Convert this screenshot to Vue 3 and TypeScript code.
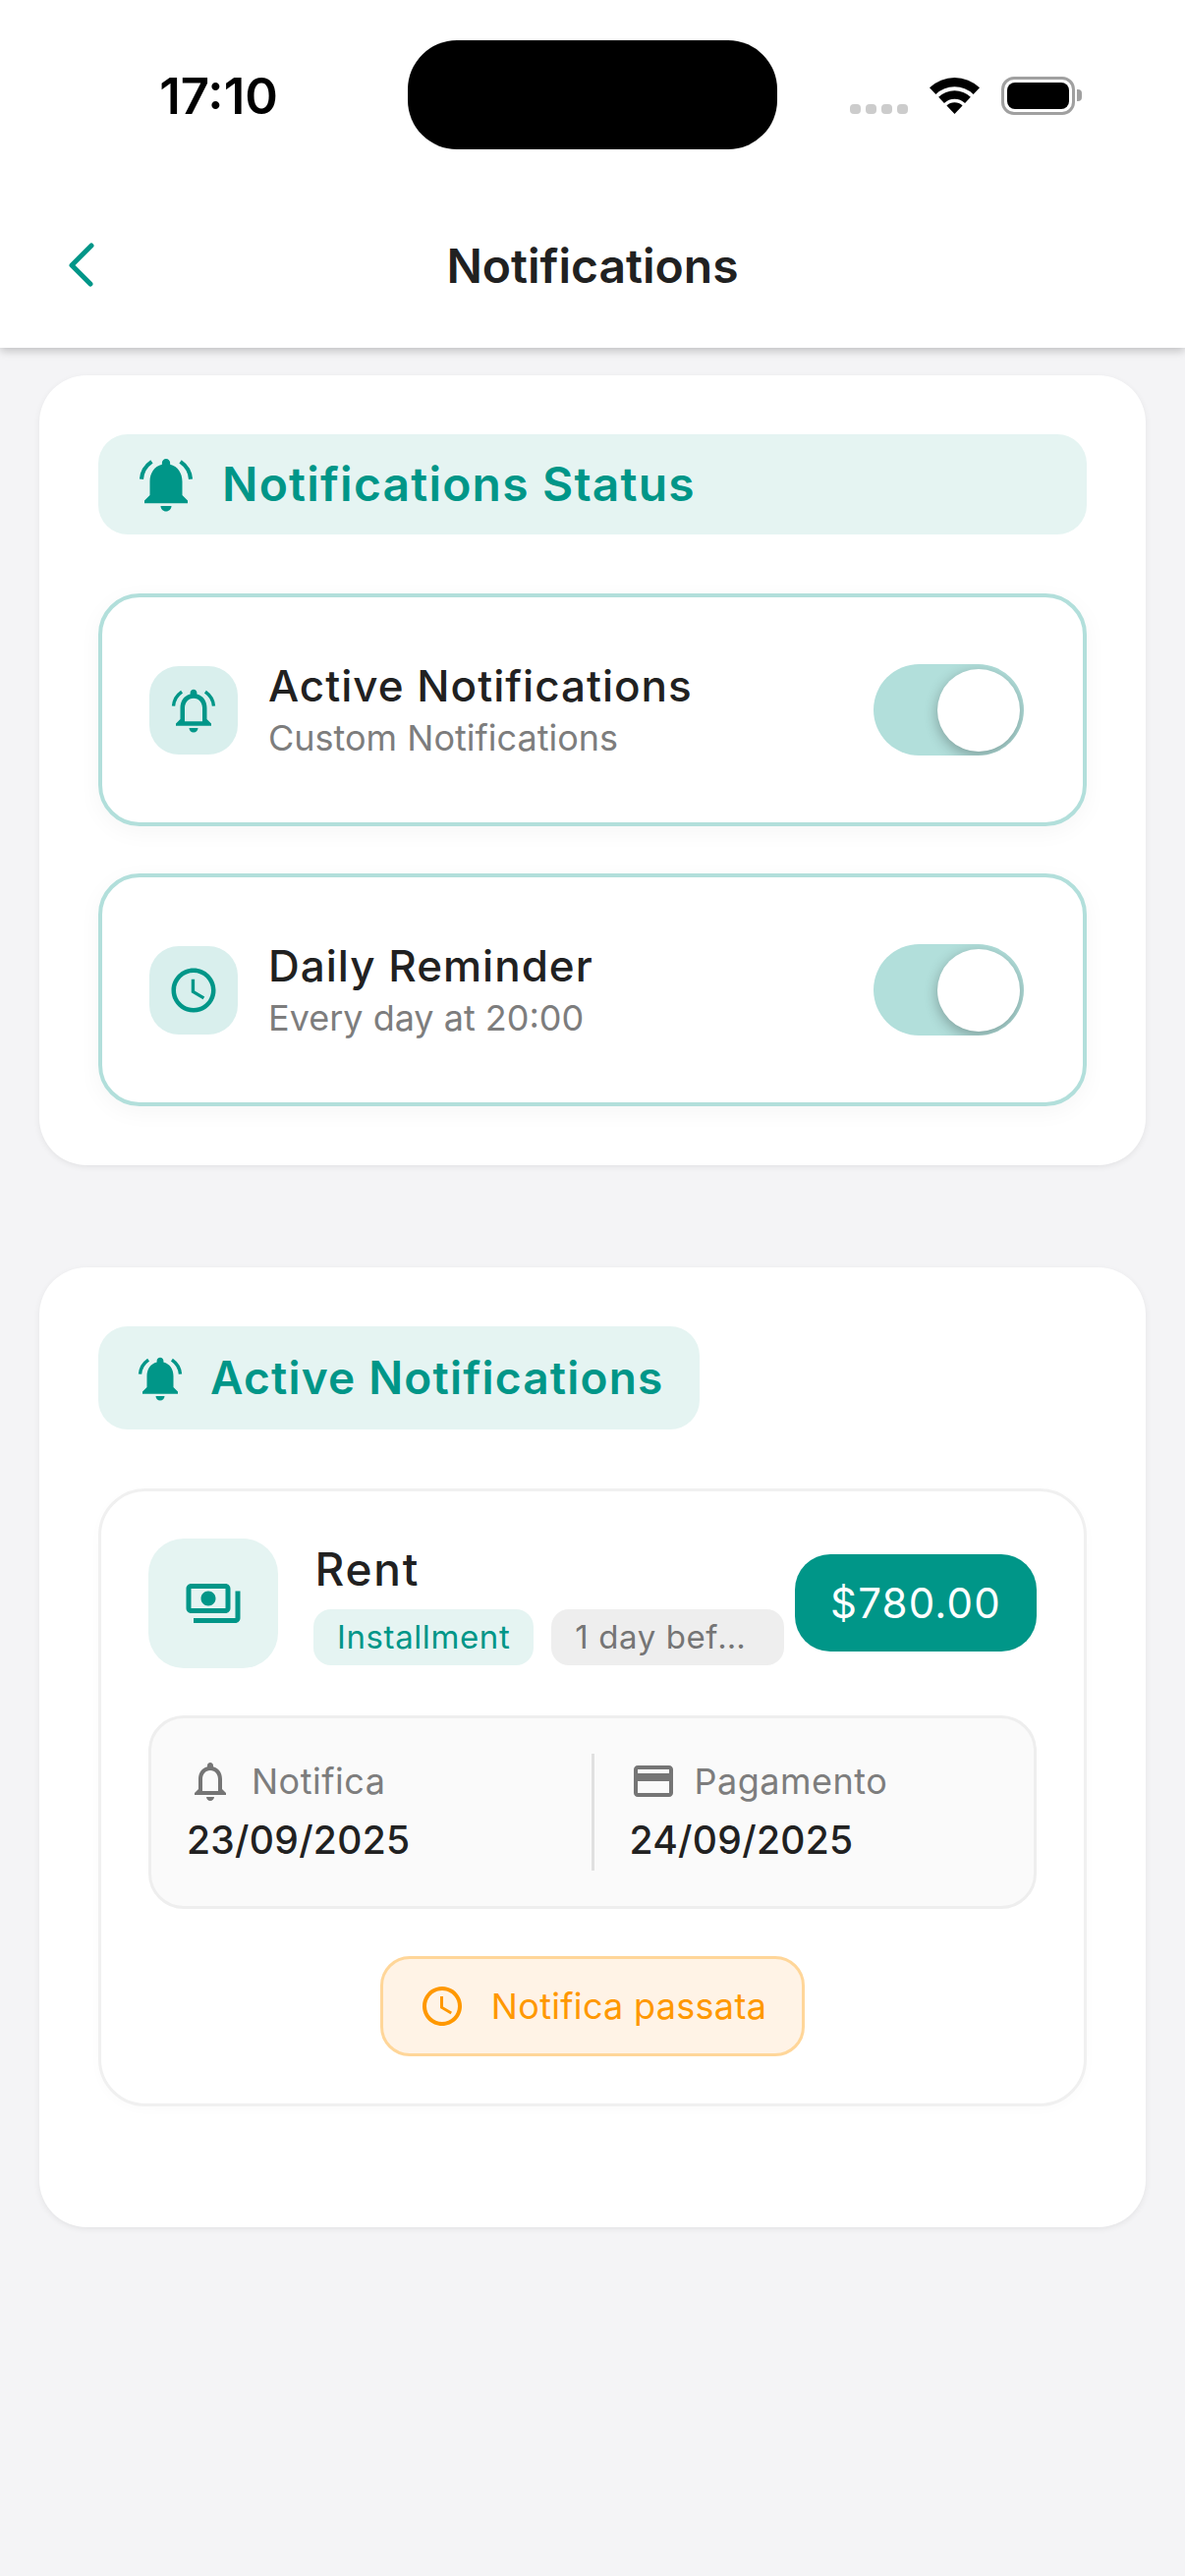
<script setup lang="ts">
const bell = 'M18 16v-5c0-3.07-1.64-5.64-4.5-6.32V4c0-.83-.67-1.5-1.5-1.5s-1.5.67-1.5 1.5v.68C7.63 5.36 6 7.92 6 11v5l-2 2v1h16v-1l-2-2zm-2 1H8v-6c0-2.48 1.51-4.5 4-4.5s4 2.02 4 4.5v6zM12 22c1.1 0 2-.9 2-2h-4c0 1.1.9 2 2 2z'
const arcs = 'M2.9 10.1Q3.2 6 6.7 3.6M21.1 10.1Q20.8 6 17.3 3.6'
const bellFilled = 'M18 16v-5c0-3.07-1.64-5.64-4.5-6.32V4c0-.83-.67-1.5-1.5-1.5s-1.5.67-1.5 1.5v.68C7.63 5.36 6 7.92 6 11v5l-2 2v1h16v-1l-2-2zM12 22c1.1 0 2-.9 2-2h-4c0 1.1.9 2 2 2z'
const clock = 'M11.99 2C6.47 2 2 6.48 2 12s4.47 10 9.99 10C17.52 22 22 17.52 22 12S17.52 2 11.99 2zM12 20c-4.42 0-8-3.58-8-8s3.58-8 8-8 8 3.58 8 8-3.58 8-8 8zm.5-13H11v6l5.25 3.15.75-1.23-4.5-2.67z'
const money = 'M19 14V6c0-1.1-.9-2-2-2H3c-1.1 0-2 .9-2 2v8c0 1.1.9 2 2 2h14c1.1 0 2-.9 2-2zm-2 0H3V6h14v8zm-7-7c-1.66 0-3 1.34-3 3s1.34 3 3 3 3-1.34 3-3-1.34-3-3-3zm13 0v11c0 1.1-.9 2-2 2H4v-2h17V7h2z'
const card = 'M20 4H4c-1.11 0-1.99.89-1.99 2L2 18c0 1.11.89 2 2 2h16c1.11 0 2-.89 2-2V6c0-1.11-.89-2-2-2zm0 14H4v-6h16v6zm0-10H4V6h16v2z'

const settings = [
  { title: 'Active Notifications', sub: 'Custom Notifications', icon: bell, ringing: true },
  { title: 'Daily Reminder', sub: 'Every day at 20:00', icon: clock, ringing: false },
]

const dates = [
  { label: 'Notifica', value: '23/09/2025', icon: bell },
  { label: 'Pagamento', value: '24/09/2025', icon: card },
]
</script>

<template>
  <div class="screen">
    <header class="topbar">
      <div class="statusbar">
        <div class="status-left"><span class="time">17:10</span></div>
        <div class="island"></div>
        <div class="status-right">
          <div class="cell"><i></i><i></i><i></i><i></i></div>
          <svg class="wifi" viewBox="0 0 51 37">
            <path d="M0 10.2A37 37 0 0 1 51 10.2L44.6 16.95A27.7 27.7 0 0 0 6.4 16.95Z" fill="#000" />
            <path d="M9.15 19.84A23.7 23.7 0 0 1 41.85 19.84L36.06 25.92A15.3 15.3 0 0 0 14.94 25.92Z" fill="#000" />
            <path d="M17.43 28.53A11.7 11.7 0 0 1 33.57 28.53L25.5 37Z" fill="#000" />
          </svg>
          <div class="battery"><div class="battery-fill"></div></div>
        </div>
      </div>
      <div class="navbar">
        <svg class="back" viewBox="0 0 27 46"><path d="M24 3L4 23L23 42" fill="none" stroke="#009688" stroke-width="5" stroke-linecap="round" stroke-linejoin="round" /></svg>
        <h1 class="page-title">Notifications</h1>
      </div>
    </header>

    <main class="content">
      <section class="panel">
        <div class="section-head section-head-wide">
          <svg class="head-icon-lg" viewBox="0 0 24 24">
            <path :d="bellFilled" fill="#009688" />
            <path :d="arcs" fill="none" stroke="#009688" stroke-width="1.5" />
          </svg>
          <span class="head-text head-text-lg">Notifications Status</span>
        </div>
        <div class="settings">
          <div v-for="item in settings" :key="item.title" class="setting">
            <div class="setting-icon">
              <svg viewBox="0 0 24 24">
                <path :d="item.icon" fill="#009688" />
                <path v-if="item.ringing" :d="arcs" fill="none" stroke="#009688" stroke-width="1.5" />
              </svg>
            </div>
            <div class="setting-text">
              <div class="setting-title">{{ item.title }}</div>
              <div class="setting-sub">{{ item.sub }}</div>
            </div>
            <div class="toggle"><div class="knob"></div></div>
          </div>
        </div>
      </section>

      <section class="panel">
        <div class="section-head section-head-fit">
          <svg class="head-icon" viewBox="0 0 24 24">
            <path :d="bellFilled" fill="#009688" />
            <path :d="arcs" fill="none" stroke="#009688" stroke-width="1.5" />
          </svg>
          <span class="head-text head-text-sm">Active Notifications</span>
        </div>
        <div class="notice">
          <div class="notice-top">
            <div class="notice-icon">
              <svg viewBox="0 0 24 24"><path :d="money" fill="#009688" /></svg>
            </div>
            <div class="notice-meta">
              <div class="notice-name">Rent</div>
              <div class="chips">
                <span class="chip chip-teal">Installment</span>
                <span class="chip chip-grey">1 day before</span>
              </div>
            </div>
            <div class="amount">$780.00</div>
          </div>
          <div class="dates">
            <template v-for="(d, i) in dates" :key="d.label">
              <div v-if="i > 0" class="dates-divider"></div>
              <div class="date-col">
                <div class="date-label">
                  <svg viewBox="0 0 24 24"><path :d="d.icon" fill="#757575" /></svg>
                  <span>{{ d.label }}</span>
                </div>
                <div class="date-value">{{ d.value }}</div>
              </div>
            </template>
          </div>
          <div class="passed-wrap">
            <div class="passed">
              <svg viewBox="0 0 24 24"><path :d="clock" fill="#ff9800" /></svg>
              <span>Notifica passata</span>
            </div>
          </div>
        </div>
      </section>
    </main>
  </div>
</template>

<style>
html, body {
  margin: 0;
  background: #f4f4f6;
}
</style>

<style scoped>
.screen {
  width: 1206px;
  height: 2622px;
  overflow: hidden;
  background: #f4f4f6;
  font-family: Inter, "Noto Sans", sans-serif;
  color: #212121;
}

.topbar {
  height: 354px;
  background: #fff;
  box-shadow: 0 3px 9px rgba(0, 0, 0, 0.22);
  position: relative;
  z-index: 1;
}

.statusbar {
  display: flex;
  height: 195px;
  padding-top: 41px;
  box-sizing: border-box;
}

.status-left {
  width: 415px;
  display: flex;
  justify-content: center;
  padding: 0 0 0 30px;
  box-sizing: border-box;
}

.time {
  font-size: 51px;
  font-weight: 600;
  line-height: 113px;
  color: #000;
}

.island {
  width: 376px;
  height: 111px;
  border-radius: 50px;
  background: #000;
}

.status-right {
  display: flex;
  align-items: flex-end;
  height: 76px;
  padding-left: 74px;
}

.cell {
  display: flex;
  gap: 5px;
  margin-bottom: 1px;
}

.cell i {
  width: 11px;
  height: 10px;
  border-radius: 4px;
  background: #cccccc;
}

.wifi {
  width: 51px;
  height: 37px;
  margin-left: 22px;
  margin-bottom: 1px;
}

.battery {
  width: 75px;
  height: 39px;
  margin-left: 22px;
  padding: 3px;
  box-sizing: border-box;
  border: 3px solid #a0a0a0;
  border-radius: 13px;
  position: relative;
}

.battery::after {
  content: "";
  position: absolute;
  right: -10px;
  top: 10px;
  width: 5px;
  height: 12px;
  border-radius: 0 4px 4px 0;
  background: #a0a0a0;
}

.battery-fill {
  height: 100%;
  border-radius: 8px;
  background: #000;
}

.navbar {
  height: 150px;
  display: flex;
  align-items: center;
  justify-content: center;
  position: relative;
}

.back {
  position: absolute;
  left: 69px;
  top: 52px;
  width: 27px;
  height: 46px;
}

.page-title {
  margin: 0;
  font-size: 48px;
  font-weight: 600;
  color: #212121;
}

.content {
  padding: 28px 40px 0;
  display: flex;
  flex-direction: column;
  gap: 104px;
}

.panel {
  background: #fff;
  border-radius: 48px;
  padding: 60px;
  box-shadow: 0 2px 6px rgba(0, 0, 0, 0.07);
}

.panel:last-child {
  padding-bottom: 123px;
}

.section-head {
  display: flex;
  align-items: center;
  background: #e5f4f2;
  border-radius: 30px;
  box-sizing: border-box;
  color: #009688;
}

.section-head-wide {
  height: 102px;
  padding: 0 36px;
  gap: 24px;
}

.section-head-fit {
  width: fit-content;
  height: 105px;
  padding: 0 36px;
  gap: 24px;
}

.head-icon-lg {
  width: 66px;
  height: 66px;
}

.head-icon {
  width: 54px;
  height: 54px;
}

.head-text {
  font-weight: 600;
  letter-spacing: 1.2px;
}

.head-text-lg {
  font-size: 48px;
  margin-bottom: 2px;
}

.head-text-sm {
  font-size: 46px;
  margin-bottom: 2px;
}

.settings {
  margin-top: 60px;
  display: flex;
  flex-direction: column;
  gap: 48px;
}

.setting {
  display: flex;
  align-items: center;
  height: 237px;
  box-sizing: border-box;
  padding: 0 60px 0 48px;
  border: 4.5px solid #b2dfdb;
  border-radius: 42px;
  box-shadow: 0 6px 24px rgba(0, 0, 0, 0.04);
}

.setting-icon {
  width: 90px;
  height: 90px;
  flex: none;
  border-radius: 30px;
  background: #d9efed;
  display: flex;
  align-items: center;
  justify-content: center;
}

.setting-icon svg {
  width: 54px;
  height: 54px;
}

.setting-text {
  flex: 1;
  margin-left: 31px;
}

.setting-title {
  font-size: 44px;
  font-weight: 500;
  line-height: 58px;
  letter-spacing: 1px;
}

.setting-sub {
  font-size: 36px;
  line-height: 49px;
  color: #7d7d7d;
}

.toggle {
  width: 153px;
  height: 93px;
  flex: none;
  border-radius: 47px;
  background: #b2dfdb;
  position: relative;
  overflow: hidden;
}

.knob {
  position: absolute;
  right: 4px;
  top: 4.5px;
  width: 84px;
  height: 84px;
  border-radius: 50%;
  background: #fff;
  box-shadow: 0 4px 14px rgba(0, 0, 0, 0.3);
}

.notice {
  margin-top: 60px;
  padding: 48px;
  border: 3px solid #f0f0f0;
  border-radius: 48px;
  background: #fff;
  box-shadow: 0 3px 12px rgba(0, 0, 0, 0.02);
}

.notice-top {
  display: flex;
  align-items: center;
}

.notice-icon {
  width: 132px;
  height: 132px;
  flex: none;
  border-radius: 36px;
  background: #e5f4f2;
  display: flex;
  align-items: center;
  justify-content: center;
}

.notice-icon svg {
  width: 60px;
  height: 60px;
}

.notice-meta {
  flex: 1;
  min-width: 0;
  margin: 0 11px 0 36px;
}

.notice-name {
  font-size: 46px;
  font-weight: 500;
  line-height: 57px;
  margin-bottom: 12px;
  padding-left: 1.5px;
  letter-spacing: 1.8px;
}

.chips {
  display: flex;
  gap: 18px;
}

.chip {
  height: 57px;
  line-height: 57px;
  padding: 0 24px;
  border-radius: 18px;
  font-size: 33px;
  font-weight: 400;
  letter-spacing: 0.6px;
  white-space: nowrap;
}

.chip-teal {
  flex: none;
  background: #e5f4f2;
  color: #009688;
}

.chip-grey {
  flex: 1;
  min-width: 0;
  overflow: hidden;
  text-overflow: ellipsis;
  background: #eeeeee;
  color: #757575;
}

.amount {
  flex: none;
  padding: 0 36px;
  height: 99px;
  line-height: 99px;
  margin-bottom: 2px;
  border-radius: 36px;
  background: #009688;
  color: #fff;
  font-size: 42px;
  font-weight: 400;
  letter-spacing: 1.2px;
}

.dates {
  margin-top: 48px;
  display: flex;
  align-items: stretch;
  padding: 36px;
  height: 197px;
  box-sizing: border-box;
  border: 3px solid #eeeeee;
  border-radius: 36px;
  background: #fafafa;
}

.dates-divider {
  width: 3px;
  flex: none;
  margin: 0 36px;
  background: #e0e0e0;
}

.date-col {
  flex: 1;
  display: flex;
  flex-direction: column;
  justify-content: center;
  gap: 9px;
}

.date-label {
  display: flex;
  align-items: center;
  gap: 18px;
  height: 48px;
  font-size: 36px;
  color: #7d7d7d;
  letter-spacing: 0.5px;
}

.date-label svg {
  width: 48px;
  height: 48px;
}

.date-value {
  font-size: 39px;
  font-weight: 500;
  line-height: 54px;
  letter-spacing: 0.3px;
}

.passed-wrap {
  margin-top: 48px;
  display: flex;
  justify-content: center;
}

.passed {
  display: flex;
  align-items: center;
  gap: 26px;
  padding: 24px 36px;
  border: 3px solid #ffd699;
  border-radius: 30px;
  background: #fff3e6;
  color: #ff9800;
  font-size: 36px;
  font-weight: 400;
  letter-spacing: 0.3px;
}

.passed svg {
  width: 48px;
  height: 48px;
}
</style>
